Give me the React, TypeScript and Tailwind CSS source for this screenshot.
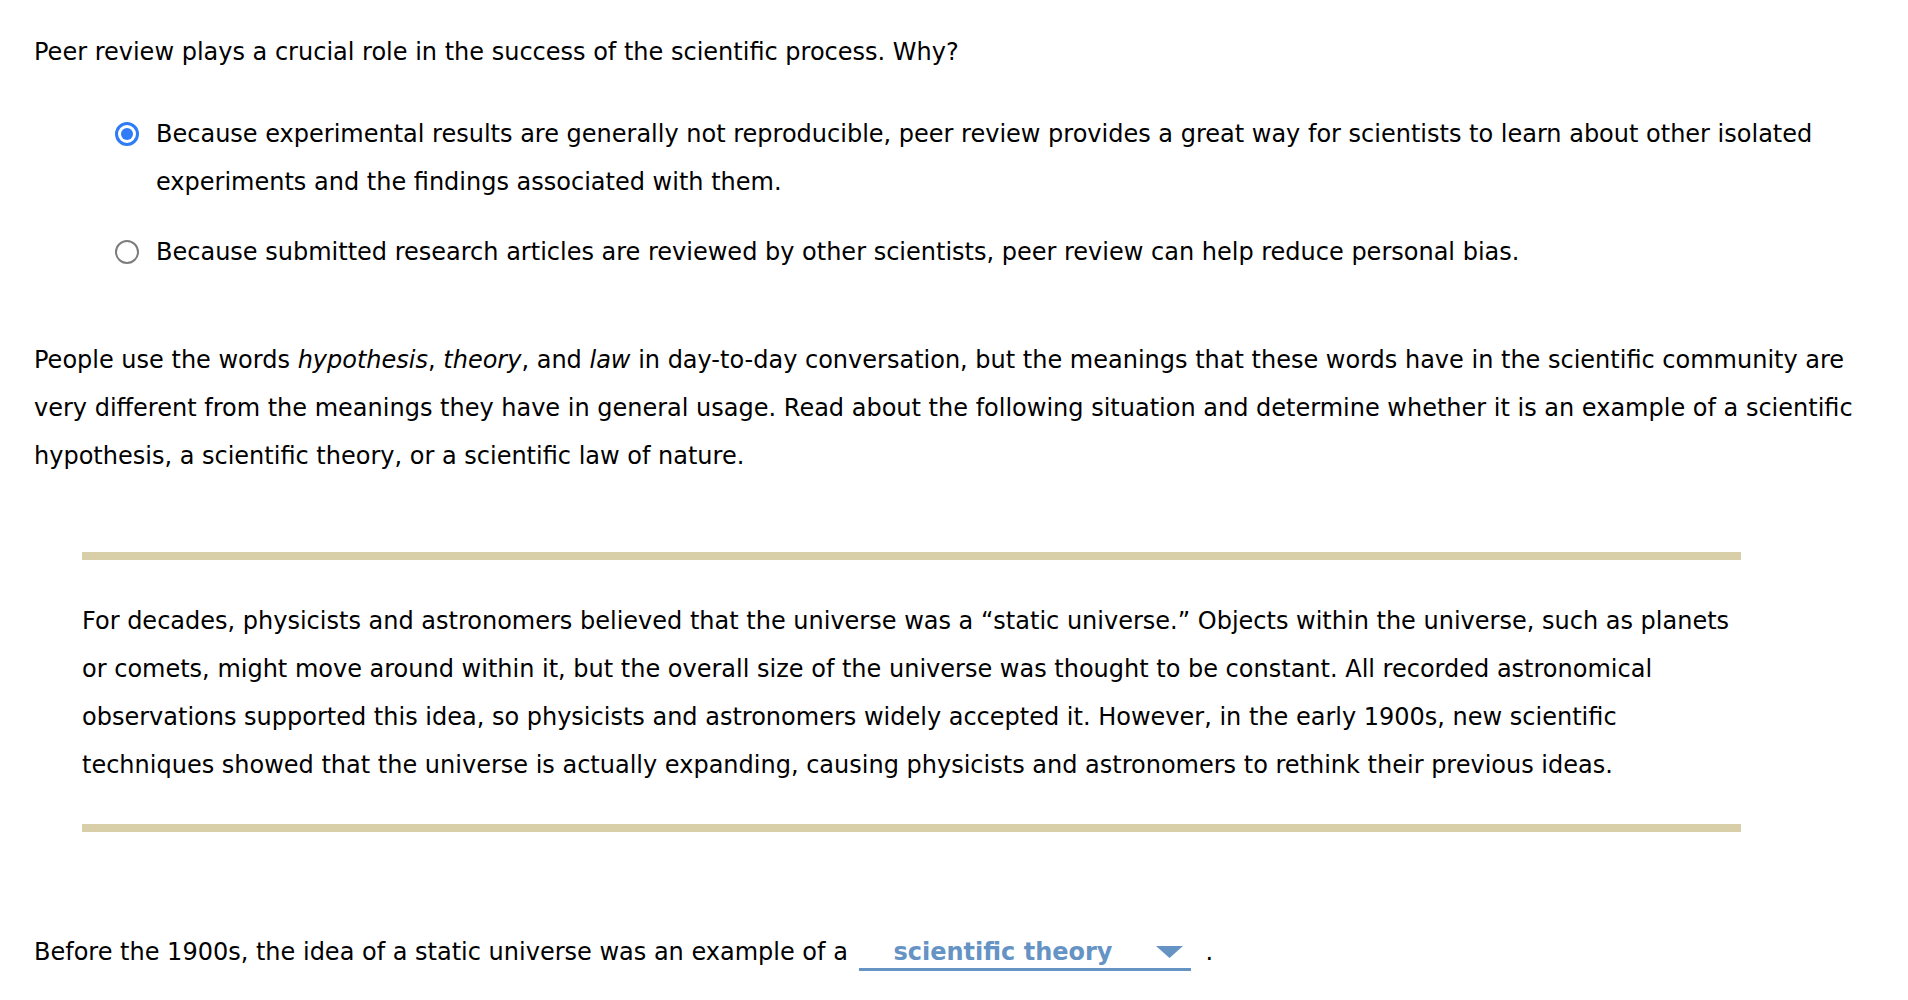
const Radio = ({ checked }: { checked: boolean }) =>
  checked ? (
    <span className="flex items-center justify-center w-[24px] h-[24px] rounded-full border-[3px] border-[#2f7cf6] bg-white">
      <span className="w-[12px] h-[12px] rounded-full bg-[#2f7cf6]" />
    </span>
  ) : (
    <span className="block w-[24px] h-[24px] rounded-full border-2 border-[#7d7d7d] bg-white" />
  );

const Option = ({ checked, children }: { checked: boolean; children: React.ReactNode }) => (
  <div className="flex pl-[81px]">
    <div className="w-[41px] h-[48px] flex items-center shrink-0">
      <Radio checked={checked} />
    </div>
    <p className="flex-1">{children}</p>
  </div>
);

const App = () => {
  return (
    <div className="w-full min-h-screen bg-white text-black font-['DejaVu_Sans',Verdana,sans-serif] text-[24px] leading-[48px] px-[34px] pt-[28px]">
      <p>Peer review plays a crucial role in the success of the scientific process. Why?</p>

      <div className="mt-[34px]">
        <Option checked>
          Because experimental results are generally not reproducible, peer review provides a great way for
          scientists to learn about other isolated experiments and the findings associated with them.
        </Option>
        <div className="mt-[22px]">
          <Option checked={false}>
            Because submitted research articles are reviewed by other scientists, peer review can help reduce
            personal bias.
          </Option>
        </div>
      </div>

      <p className="mt-[60px]">
        People use the words <i>hypothesis</i>, <i>theory</i>, and <i>law</i> in day-to-day conversation, but the
        meanings that these words have in the scientific community are very different from the meanings they have
        in general usage. Read about the following situation and determine whether it is an example of a scientific
        hypothesis, a scientific theory, or a scientific law of nature.
      </p>

      <div className="mt-[72px] ml-[48px] w-[1659px]">
        <hr className="h-[8px] border-0 bg-[#d8cfa9]" />
        <p className="pt-[37px] pb-[35px]">
          For decades, physicists and astronomers believed that the universe was a “static universe.” Objects within
          the universe, such as planets or comets, might move around within it, but the overall size of the universe
          was thought to be constant. All recorded astronomical observations supported this idea, so physicists and
          astronomers widely accepted it. However, in the early 1900s, new scientific techniques showed that the
          universe is actually expanding, causing physicists and astronomers to rethink their previous ideas.
        </p>
        <hr className="h-[8px] border-0 bg-[#d8cfa9]" />
      </div>

      <p className="mt-[96px]">
        Before the 1900s, the idea of a static universe was an example of a{" "}
        <span className="inline-flex items-center justify-between w-[332px] h-[36px] align-middle border-b-[3px] border-[#6593c4] pl-[34px] pr-[8px] ml-[4px] mr-[14px] font-bold text-[#6593c4] leading-[30px]">
          <span>scientific theory</span>
          <svg width="27" height="12" viewBox="0 0 27 12">
            <polygon points="0,0 27,0 13.5,12" fill="#6593c4" />
          </svg>
        </span>
        .
      </p>
    </div>
  );
};

export default App;
